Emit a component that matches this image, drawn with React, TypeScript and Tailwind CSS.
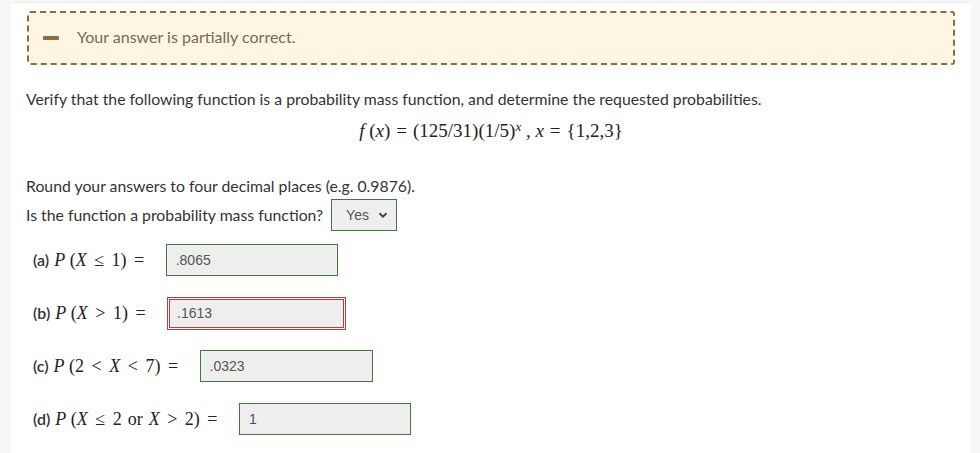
import React from "react";

const serif = { fontFamily: '"Liberation Serif", "Times New Roman", serif' };
const sans = { fontFamily: '"Liberation Sans", Arial, sans-serif' };

function I({ children }: { children: React.ReactNode }) {
  return <span className="italic">{children}</span>;
}

function Rel({ children }: { children: React.ReactNode }) {
  return <span className="px-[6px]">{children}</span>;
}

function R({ children }: { children: React.ReactNode }) {
  return <span className="px-[7.5px]">{children}</span>;
}

function Label({ tag, children }: { tag: string; children: React.ReactNode }) {
  return (
    <span className="flex items-baseline whitespace-nowrap">
      <span className="font-semibold text-[16px] text-[#333]">{tag}</span>
      <span className="ml-[5px] text-[18px] text-[#222]" style={serif}>
        {children}
      </span>
    </span>
  );
}

function Box({ value, w, color = "#555" }: { value: string; w: string; color?: string }) {
  return (
    <div
      className={`${w} h-[32px] border border-[#3f7a3a] bg-[#eeeeee] flex items-center pl-[9px] text-[14px]`}
      style={{ ...sans, color }}
    >
      {value}
    </div>
  );
}

export default function App() {
  return (
    <div className="w-[980px] h-[453px] bg-[#f7f7f7] pt-[2px] pl-[11px] pr-[9px] overflow-hidden">
      <div
        className="h-full bg-white border-t border-[#ececec] px-[16px] pt-[8px] text-[#333]"
        style={{ fontFamily: "Lato, 'Open Sans', sans-serif" }}
      >
        <div className="h-[54px] border-2 border-dashed border-[#8c6d3a] rounded-[3px] bg-[#fdf6e3] flex items-center">
          <span className="ml-[14px] w-[16px] h-[4px] rounded-[1px] bg-[#8c6d3a]" />
          <span className="ml-[18px] text-[16px] text-[#7a6a4c] mt-[-2px]">Your answer is partially correct.</span>
        </div>

        <div className="mt-[23px] text-[15.8px] leading-[22px] -ml-[1px]">
          Verify that the following function is a probability mass function, and determine the requested probabilities.
        </div>

        <div className="mt-[10px] text-center text-[19px] leading-[22px] text-[#222]" style={serif}>
          <I>f</I> (<I>x</I>)<Rel>=</Rel>(125/31)(1/5)<sup className="italic text-[13px]">x</sup> , <I>x</I>
          <Rel>=</Rel>
          {"{1,2,3}"}
        </div>

        <div className="mt-[33px] text-[15.8px] leading-[22px] -ml-[1px]">
          Round your answers to four decimal places (e.g. 0.9876).
        </div>

        <div className="mt-[2px] flex items-center -ml-[1px]">
          <span className="text-[15.8px]">Is the function a probability mass function?</span>
          <div
            className="ml-[8px] w-[66px] h-[32px] border border-[#3f7a3a] bg-[#eeeeee] flex items-center justify-between pl-[14px] pr-[8px] text-[14px] text-[#555]"
            style={sans}
          >
            <span>Yes</span>
            <svg width="10" height="8" viewBox="0 0 10 8">
              <path d="M1.5 2.2 L5 5.6 L8.5 2.2" fill="none" stroke="#444" strokeWidth="2" />
            </svg>
          </div>
        </div>

        <div className="mt-[13px] ml-[6px] flex items-center gap-[14px]">
          <Label tag="(a)">
            <I>P</I> (<I>X</I>
            <R>≤</R>1)<R>=</R>
          </Label>
          <Box value=".8065" w="w-[172px]" />
        </div>

        <div className="mt-[21px] ml-[6px] flex items-center gap-[14px]">
          <Label tag="(b)">
            <I>P</I> (<I>X</I>
            <R>&gt;</R>1)<R>=</R>
          </Label>
          <div className="w-[179px] h-[33px] border border-solid border-[#a94442] p-[1px] bg-[#f6f6f6]">
            <div
              className="w-full h-full border border-solid border-[#a94442] bg-[#eeeeee] flex items-center pl-[7px] text-[14px] text-[#555]"
              style={sans}
            >
              .1613
            </div>
          </div>
        </div>

        <div className="mt-[20px] ml-[6px] flex items-center gap-[14px]">
          <Label tag="(c)">
            <I>P</I> (2<R>&lt;</R>
            <I>X</I>
            <R>&lt;</R>7)<R>=</R>
          </Label>
          <Box value=".0323" w="w-[173px]" />
        </div>

        <div className="mt-[21px] ml-[6px] flex items-center gap-[14px]">
          <Label tag="(d)">
            <I>P</I> (<I>X</I>
            <R>≤</R>2<span className="px-[1.5px]"> or </span>
            <I>X</I>
            <R>&gt;</R>2)<R>=</R>
          </Label>
          <Box value="1" w="w-[172px]" color="#5a4470" />
        </div>
      </div>
    </div>
  );
}
